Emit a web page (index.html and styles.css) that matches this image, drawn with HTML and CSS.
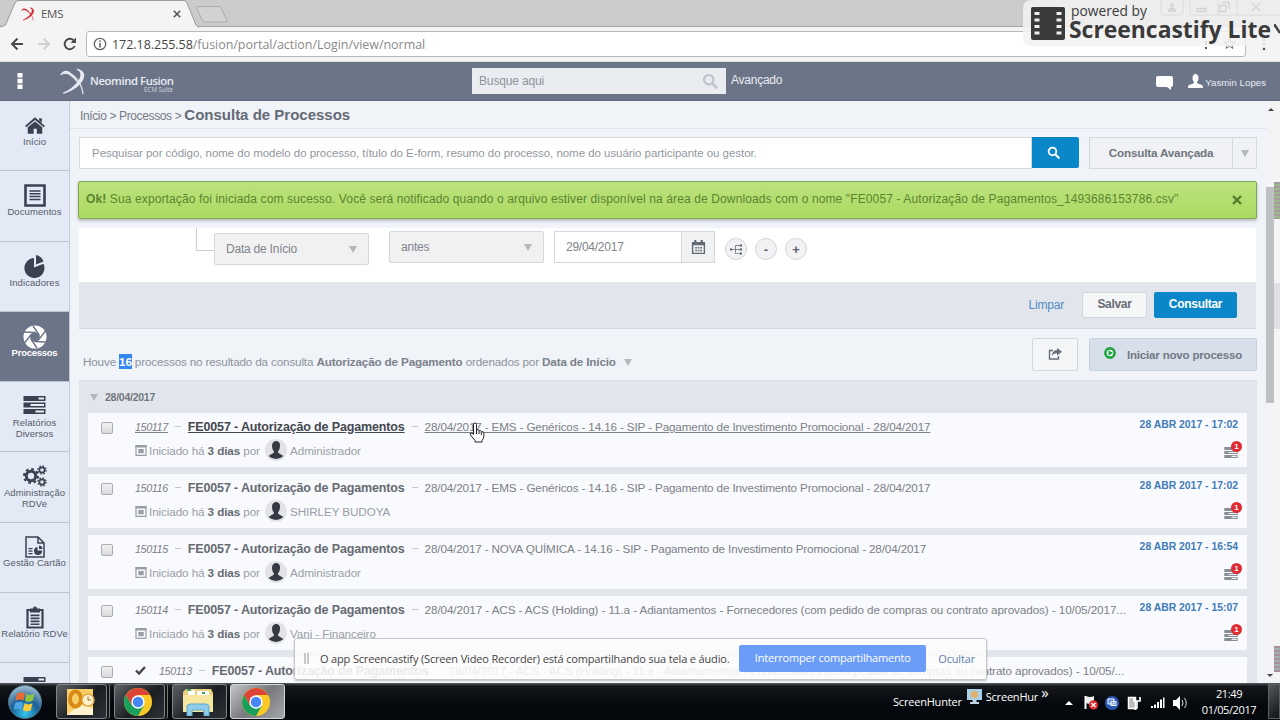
FILE: index.html
```
<!DOCTYPE html>
<html lang="pt-BR">

<head>
   <meta charset="UTF-8" />
   <meta name="viewport" content="width=device-width, initial-scale=1.0" />
   <title>EMS</title>
   <link rel="stylesheet" href="styles.css">
</head>

<body>
   <svg class="sprite" width="0" height="0">
      <symbol id="i-swoosh" viewBox="0 0 28 28">
         <path d="M1 7C6 -2 15 5 21 19C14 8 7 3 1 7Z M18 1C33 3 25 21 3 27C21 17 26 6 18 1Z" />
         <path d="M1 7C9 1 22 10 24.500 27M18 1.500C31 5 23 19 4 26" fill="none" stroke="currentColor" stroke-width="1.300" />
      </symbol>
      <symbol id="i-search" viewBox="0 0 16 16">
         <path d="M11 11L14.5 14.5" stroke="currentColor" stroke-width="2.6" stroke-linecap="round" />
         <circle cx="6.7" cy="6.7" r="4.7" fill="none" stroke="currentColor" stroke-width="2.2" />
      </symbol>
      <symbol id="i-list" viewBox="0 0 22 18">
         <path d="M0 0h22v5H0zM0 6.5h22v5H0zM0 13h22v5H0z" />
         <path d="M15 1.5h5.5v2H15zM7 8h13.5v2H7zM12 14.500h8.500v2H12z" fill="#e8edf8" />
      </symbol>
      <symbol id="i-cal" viewBox="0 0 14 14">
         <path d="M1.500 2.500h11v10h-11z" fill="none" stroke="currentColor" stroke-width="1.300" />
         <path d="M1 2h12v2.800H1zM3 0h2v2H3zM9 0h2v2H9zM4 6.500h1.500v1.500H4zM6.300 6.500h1.500v1.500H6.300zM8.600 6.500h1.500v1.500H8.600zM4 9h1.500v1.500H4zM6.300 9h1.500v1.500H6.300zM8.600 9h1.500v1.500H8.600z" />
      </symbol>
      <symbol id="i-date" viewBox="0 0 12 12">
         <path d="M1 1.500h10v9.800H1z" fill="none" stroke="currentColor" stroke-width="1.200" />
         <path d="M.5 1h11v2.500H.5zM3.300 5h5.400v4.200H3.300z" />
      </symbol>
      <symbol id="i-avatar" viewBox="0 0 22 22">
         <circle cx="11" cy="11" r="11" fill="#e1e3e7" />
         <path d="M7 6.500c0-6 8.500-6 8 0 0 3-1 5-2 6 .2 2 1.500 2 5.500 4.500A11 11 0 0 1 3.500 17C7 14.500 8.800 14.500 9 12.500 7.800 11.500 7 9.500 7 6.500Z" fill="#363944" />
      </symbol>
      <symbol id="i-person" viewBox="0 0 15 14">
         <path d="M4.500 4c0-5.300 6-5.300 6 0 0 2-1 3.500-1.500 4.200.2 1.500 2 1.500 4.500 2.500 1 .4 1.500 1.300 1.500 3.300H0c0-2 .5-2.900 1.500-3.300 2.500-1 4.300-1 4.500-2.500C5.500 7.500 4.500 6 4.500 4Z" />
      </symbol>
      <symbol id="i-chrome" viewBox="0 0 28 28">
         <circle cx="14" cy="14" r="14" fill="#fbc926" />
         <path d="M14 7H26.100A14 14 0 0 0 1.900 7L8 17.500 14 14Z" fill="#dc4437" />
         <path d="M1.900 7A14 14 0 0 0 14 28L20 17.500 14 14 8 17.500Z" fill="#19a05d" />
         <circle cx="14" cy="14" r="6.700" fill="#fff" />
         <circle cx="14" cy="14" r="5.200" fill="#4587f3" />
      </symbol>
   </svg>

   <div class="tabs">
      <svg class="tab-shape" width="240" height="28" viewBox="0 0 240 28">
         <path d="M0 27L5.500 25L15 3Q16 .5 19 .5H183Q186 .5 187 3L196 25L199 27.500" fill="#f4f4f4" stroke="#9b9b9b" />
         <path d="M197 8.500Q196 6.500 198 6.500H218Q220 6.500 221 8.500L227 20Q228 22 226 22H205Q203 22 202 20Z" fill="#d2d2d2" stroke="#aaa" />
      </svg>
      <div class="tab-text">
         <svg class="tab-icon" width="14" height="14"><use href="#i-swoosh" /></svg>
         <span>EMS</span>
         <svg class="tab-close" width="8" height="8" viewBox="0 0 8 8"><path d="M.8 .8L7.200 7.200M7.200 .8L.8 7.200" stroke="#555" stroke-width="1.600" /></svg>
      </div>
   </div>

   <div class="toolbar">
      <svg width="76" height="20" viewBox="0 0 76 20" fill="none" stroke="#4a4a4a" stroke-width="1.900">
         <path d="M13 10H2M7.500 4.500L2 10L7.500 15.500" />
         <path d="M28 10H39M33.500 4.500L39 10L33.500 15.500" stroke="#d0d0d0" />
         <path d="M63.500 6.200A5.200 5.200 0 1 0 64.700 12" />
         <path d="M66 3.500V9H60.500Z" fill="#4a4a4a" stroke="none" />
      </svg>
      <div class="address">
         <svg width="14" height="14" viewBox="0 0 14 14"><circle cx="7" cy="7" r="5.700" fill="none" stroke="#666" stroke-width="1.300" /><path d="M6.200 3.400h1.600v1.500H6.200zM6.200 6h1.600v4.500H6.200z" fill="#666" /></svg>
         <span class="url"><b>172.18.255.58</b>/fusion/portal/action/Login/view/normal</span>
         <svg class="star" width="38" height="16" viewBox="0 0 38 16"><path d="M3 5v4M3 11v2" stroke="#555" stroke-width="2" /><path d="M26.500 2l1.400 3.800 4 .2-3 2.500 1 4-3.400-2.300-3.400 2.300 1-4-3-2.500 4-.2z" fill="#fff" stroke="#777" /></svg>
      </div>
      <svg class="dots" width="4" height="14" viewBox="0 0 4 14" fill="#555"><circle cx="2" cy="3" r="1.300" /><circle cx="2" cy="7.500" r="1.300" /><circle cx="2" cy="12" r="1.300" /></svg>
   </div>

   <div class="watermark">
      <svg class="win-buttons" width="122" height="16" viewBox="0 0 122 16" fill="none" stroke="#dcdcdc">
         <path d="M1 0V12Q1 15 4 15H20Q23 15 23 12V0M30 0V12Q30 15 33 15H122M58 0V15M77 0V15" />
         <path d="M37 8.500h9v3h-9zM62 2.500h7v6M60 5.500h6v6h-6zM92 3l8 8M100 3l-8 8M8.500 11c0-3 7-3 7 0zM10.500 5.500a1.500 1.500 0 0 1 3 0 1.500 1.500 0 0 1-3 0" stroke="#d2d2d2" stroke-width="1.300" />
      </svg>
      <svg width="34" height="33" viewBox="0 0 34 33">
         <path d="M2 0h30q2 0 2 2v29q0 2-2 2H2q-2 0-2-2V2Q0 0 2 0Z" fill="#3a3a3a" />
         <path d="M3.500 5h5v3h-5zM3.500 11.500h5v3h-5zM3.500 18h5v3h-5zM3.500 24.500h5v3h-5zM25.500 5h5v3h-5zM25.500 11.500h5v3h-5zM25.500 18h5v3h-5zM25.500 24.500h5v3h-5z" fill="#eee" />
      </svg>
      <div class="watermark-text">
         <small>powered by</small>
         <strong>Screencastify Lite</strong>
      </div>
      <svg class="watermark-end" width="6" height="12" viewBox="0 0 6 12"><path d="M0 0L6 9" stroke="#444" stroke-width="2.500" /></svg>
   </div>

   <header class="header">
      <svg class="menu" width="6" height="16" viewBox="0 0 6 16" fill="#fff"><path d="M.5 0h5v4.500h-5zM.5 5.700h5v4.500h-5zM.5 11.400h5v4.500h-5z" /></svg>
      <svg class="logo-mark" width="28" height="27"><use href="#i-swoosh" /></svg>
      <div class="logo"><b>Neomind Fusion</b><span>ECM Suite</span></div>
      <div class="quick-search"><span>Busque aqui</span><svg width="16" height="16"><use href="#i-search" /></svg></div>
      <span class="advanced">Avançado</span>
      <svg class="chat" width="17" height="14" viewBox="0 0 17 14" fill="#fff"><path d="M2 0h13q2 0 2 2v7q0 2-2 2v3l-4-3H2q-2 0-2-2V2Q0 0 2 0Z" /></svg>
      <svg class="person" width="15" height="14"><use href="#i-person" /></svg>
      <span class="user">Yasmin Lopes</span>
   </header>

   <div class="app">
      <nav class="sidebar">
         <a class="item">
            <svg width="20" height="17" viewBox="0 0 22 18"><path d="M11 0L22 9.500l-1.300 1.500L11 3 1.300 11 0 9.500zM15.500 1h3v5l-3-2.500zM11 4.500L19 11v7h-6v-5.500H9.500V18H3v-7z" /></svg>
            <span>Início</span>
         </a>
         <a class="item">
            <svg width="22" height="23" viewBox="0 0 22 23"><path d="M1.500 1.500h19v20h-19z" fill="none" stroke="#3c4150" stroke-width="2.600" /><path d="M5.500 7h11M5.500 9.800h11M5.500 12.600h11M5.500 15.400h11" stroke="#3c4150" stroke-width="1.500" /></svg>
            <span>Documentos</span>
         </a>
         <a class="item">
            <svg width="21" height="23" viewBox="0 0 21 23"><path d="M10 3v9.500l9.500-3.700A10 10 0 1 1 10 3Z" /><path d="M12 0a10 10 0 0 1 7.500 6.500L12 9.500Z" /></svg>
            <span>Indicadores</span>
         </a>
         <a class="item active">
            <svg width="24" height="24" viewBox="0 0 24 24"><circle cx="12" cy="12" r="11.500" /><path d="M12 7.500L16 9.700V14.300L12 16.500L8 14.300V9.700ZM16 9.700L10 1M16 14.300L22.500 6M12 16.500L23 17M8 14.300L14 23M8 9.700L1.500 18M12 7.500L1 7" fill="#6c7587" stroke="#6c7587" stroke-width="1.400" /></svg>
            <span>Processos</span>
         </a>
         <a class="item">
            <svg width="23" height="18"><use href="#i-list" /></svg>
            <span>Relatórios<br>Diversos</span>
         </a>
         <a class="item">
            <svg width="24" height="22" viewBox="0 0 24 22" fill="none" stroke="#3c4150"><circle cx="8" cy="11" r="4.700" stroke-width="3" /><circle cx="8" cy="11" r="7" stroke-width="2" stroke-dasharray="2.750" /><circle cx="19" cy="5" r="2.600" stroke-width="1.600" /><circle cx="19" cy="5" r="4" stroke-width="1.400" stroke-dasharray="1.570" /><circle cx="19" cy="17" r="2.600" stroke-width="1.600" /><circle cx="19" cy="17" r="4" stroke-width="1.400" stroke-dasharray="1.570" /></svg>
            <span>Administração<br>RDVe</span>
         </a>
         <a class="item">
            <svg width="20" height="22" viewBox="0 0 20 22"><path d="M1 1h12l6 6v14H1zM13 1v6h6" fill="none" stroke="#3c4150" stroke-width="1.500" /><path d="M3.500 12h4v1.300h-4zM3.500 14.500h4v1.300h-4zM3.500 17h4v1.300h-4zM12.500 11v3.500H17a4 4 0 1 1-4.500-3.500zM14 9.500a4 4 0 0 1 3.500 3.500H14z" /></svg>
            <span>Gestão Cartão</span>
         </a>
         <a class="item">
            <svg width="18" height="23" viewBox="0 0 18 23"><path d="M1.500 4h15v17.500h-15z" fill="none" stroke="#3c4150" stroke-width="2.200" /><path d="M4 2.500h3a2 2 0 0 1 4 0h3V6.500H4zM4.500 8.500h9v1.700h-9zM4.500 11.500h9v1.700h-9zM4.500 14.500h9v1.700h-9zM4.500 17.500h9v1.500h-9z" /></svg>
            <span>Relatório RDVe</span>
         </a>
         <a class="item">
            <svg width="23" height="18"><use href="#i-list" /></svg>
         </a>
      </nav>

      <main class="content">
         <div class="breadcrumb">Início &gt; Processos &gt; <b>Consulta de Processos</b></div>

         <div class="search-row">
            <div class="search-input">Pesquisar por código, nome do modelo do processo, título do E-form, resumo do processo, nome do usuário participante ou gestor.</div>
            <div class="search-btn"><svg width="13" height="13"><use href="#i-search" /></svg></div>
            <div class="adv-btn"><b>Consulta Avançada</b><i><em class="caret"></em></i></div>
         </div>

         <div class="alert">
            <span><b>Ok!</b> Sua exportação foi iniciada com sucesso. Você será notificado quando o arquivo estiver disponível na área de Downloads com o nome "FE0057 - Autorização de Pagamentos_1493686153786.csv"</span>
            <svg width="10" height="10" viewBox="0 0 10 10"><path d="M1 1L9 9M9 1L1 9" stroke="#527c2c" stroke-width="2.400" /></svg>
         </div>

         <div class="filter">
            <div class="branch"></div>
            <div class="select first">Data de Início<em class="caret"></em></div>
            <div class="select">antes<em class="caret"></em></div>
            <div class="date"><span>29/04/2017</span><i><svg width="15" height="15"><use href="#i-cal" /></svg></i></div>
            <div class="round"><svg width="12" height="11" viewBox="0 0 12 11" fill="none" stroke="#59616e"><path d="M0 5.500h5M9 1.500H5.500v8H9M5.500 5.500H9" stroke-dasharray="1.500 .6" /><path d="M0 5.500h2M9.500 1.500h2.500M9.500 5.500h2.500M9.500 9.500h2.500" stroke-width="1.800" /></svg></div>
            <div class="round">-</div>
            <div class="round">+</div>
         </div>
         <div class="filter-actions">
            <a>Limpar</a>
            <div class="btn">Salvar</div>
            <div class="btn primary">Consultar</div>
         </div>

         <div class="summary">
            <p>Houve <mark>16</mark> processos no resultado da consulta <b>Autorização de Pagamento</b> ordenados por <b>Data de Início</b><em class="caret"></em></p>
            <div class="share"><svg width="14" height="12" viewBox="0 0 14 12"><path d="M5 2.500H1.500v8.500h9V8" fill="none" stroke="#666d78" stroke-width="1.400" /><path d="M9 0l5 3.800-5 3.700V5.200C6 5.200 5 6.200 4 8c0-4 2-5.800 5-5.800z" fill="#666d78" /></svg></div>
            <div class="new-process"><svg width="12" height="12" viewBox="0 0 12 12"><circle cx="6" cy="6" r="4.600" fill="#fff" stroke="#1ca53c" stroke-width="2.600" /><path d="M4.500 3.300L9 6l-4.500 2.700z" fill="#1ca53c" /></svg>Iniciar novo processo</div>
         </div>

         <section class="list">
            <div class="group"><em class="caret"></em>28/04/2017</div>

            <article class="card hover">
               <div class="box"></div>
               <div class="info">
                  <div class="line"><i class="code">150117</i><s></s><b>FE0057 - Autorização de Pagamentos</b><s></s><span class="desc">28/04/2017 - EMS - Genéricos - 14.16 - SIP - Pagamento de Investimento Promocional - 28/04/2017</span></div>
                  <div class="meta"><svg width="12" height="12"><use href="#i-date" /></svg>Iniciado há <b>3 dias</b> por <svg class="avatar" width="22" height="22"><use href="#i-avatar" /></svg>Administrador</div>
               </div>
               <div class="side"><time>28 ABR 2017 - 17:02</time><div class="tasks"><svg width="14" height="11"><use href="#i-list" /></svg><span>1</span></div></div>
            </article>

            <article class="card">
               <div class="box"></div>
               <div class="info">
                  <div class="line"><i class="code">150116</i><s></s><b>FE0057 - Autorização de Pagamentos</b><s></s><span class="desc">28/04/2017 - EMS - Genéricos - 14.16 - SIP - Pagamento de Investimento Promocional - 28/04/2017</span></div>
                  <div class="meta"><svg width="12" height="12"><use href="#i-date" /></svg>Iniciado há <b>3 dias</b> por <svg class="avatar" width="22" height="22"><use href="#i-avatar" /></svg>SHIRLEY BUDOYA</div>
               </div>
               <div class="side"><time>28 ABR 2017 - 17:02</time><div class="tasks"><svg width="14" height="11"><use href="#i-list" /></svg><span>1</span></div></div>
            </article>

            <article class="card">
               <div class="box"></div>
               <div class="info">
                  <div class="line"><i class="code">150115</i><s></s><b>FE0057 - Autorização de Pagamentos</b><s></s><span class="desc">28/04/2017 - NOVA QUÍMICA - 14.16 - SIP - Pagamento de Investimento Promocional - 28/04/2017</span></div>
                  <div class="meta"><svg width="12" height="12"><use href="#i-date" /></svg>Iniciado há <b>3 dias</b> por <svg class="avatar" width="22" height="22"><use href="#i-avatar" /></svg>Administrador</div>
               </div>
               <div class="side"><time>28 ABR 2017 - 16:54</time><div class="tasks"><svg width="14" height="11"><use href="#i-list" /></svg><span>1</span></div></div>
            </article>

            <article class="card">
               <div class="box"></div>
               <div class="info">
                  <div class="line"><i class="code">150114</i><s></s><b>FE0057 - Autorização de Pagamentos</b><s></s><span class="desc long">28/04/2017 - ACS - ACS (Holding) - 11.a - Adiantamentos - Fornecedores (com pedido de compras ou contrato aprovados) - 10/05/2017...</span></div>
                  <div class="meta"><svg width="12" height="12"><use href="#i-date" /></svg>Iniciado há <b>3 dias</b> por <svg class="avatar" width="22" height="22"><use href="#i-avatar" /></svg>Vani - Financeiro</div>
               </div>
               <div class="side"><time>28 ABR 2017 - 15:07</time><div class="tasks"><svg width="14" height="11"><use href="#i-list" /></svg><span>1</span></div></div>
            </article>

            <article class="card">
               <div class="box"></div>
               <div class="info">
                  <div class="line"><svg class="check" width="11" height="9" viewBox="0 0 11 9"><path d="M1 4.500L4 7.500L10 1" fill="none" stroke="#444" stroke-width="2.400" /></svg><i class="code">150113</i><s></s><b>FE0057 - Autorização de Pagamentos</b><s></s><span class="desc long">28/04/2017 - ACS - ACS (Holding) - 11.a - Adiantamentos - Fornecedores (com pedido de compras ou contrato aprovados) - 10/05/...</span></div>
               </div>
            </article>
         </section>
      </main>

      <div class="scrollbar"><i class="up"></i><i class="thumb"></i><i class="down"></i></div>
      <div class="edge"><i class="edge-alert"></i><i class="edge-panel"></i><i class="edge-bottom"></i></div>
   </div>

   <div class="share-bar">
      <i class="grip"></i>
      <span class="share-text">O app Screencastify (Screen Video Recorder) está compartilhando sua tela e áudio.</span>
      <span class="stop">Interromper compartilhamento</span>
      <a>Ocultar</a>
   </div>

   <svg class="cursor" width="16" height="21" viewBox="0 0 16 21"><path d="M4.500 12V2.500Q4.500 1 6 1T7.500 2.500V8Q9.500 7 10 8.700Q12 8 12.300 9.700Q14.800 9 14.800 11.500V14.500Q14.500 17 13 18.500V20H6V18.500L1.500 13Q.5 11.500 2 11Q3 10.800 4.500 12.500Z" fill="#fff" stroke="#222" /><path d="M7.500 8v4M10 9v3M12.300 10v3" stroke="#222" /></svg>

   <footer class="taskbar">
      <svg class="start" width="36" height="34" viewBox="0 0 36 34">
         <defs><radialGradient id="orb" cx=".5" cy=".85" r=".85"><stop offset="0" stop-color="#35c5ee" /><stop offset=".5" stop-color="#1a5f95" /><stop offset="1" stop-color="#a9c4d5" /></radialGradient></defs>
         <circle cx="18" cy="17" r="16.500" fill="url(#orb)" stroke="#4f7189" />
         <path d="M10 9q4-2.500 8-.5l-1.500 7q-4-2-8 .3z" fill="#ea6a32" />
         <path d="M19.500 9q4 2 8-.2l-1.700 7q-4 2.200-8 0z" fill="#8fc640" />
         <path d="M8 18q4-2.300 8-.3l-1.600 7q-4-2-7.900.3z" fill="#4ba5e4" />
         <path d="M17.500 18.300q4 2.200 8 0l-1.700 7q-4 2.200-8 0z" fill="#fbcb3c" />
      </svg>
      <div class="task stacked">
         <svg width="30" height="28" viewBox="0 0 30 28"><path d="M2 1h26v26H2z" fill="#f6cf66" /><path d="M4 25l11-8 13 3v7H2z" fill="#fff4d0" /><ellipse cx="10.500" cy="11" rx="5.500" ry="7.500" fill="none" stroke="#d98a16" stroke-width="4" /><circle cx="23" cy="12" r="6" fill="#fff3cf" stroke="#e3a944" stroke-width="1.500" /><path d="M23 8.500V12h3" fill="none" stroke="#a06d1c" /></svg>
      </div>
      <div class="task stacked second"><svg width="28" height="28"><use href="#i-chrome" /></svg></div>
      <div class="task third">
         <svg width="32" height="28" viewBox="0 0 32 28"><path d="M1 4l3-3h25l2 4v19H1z" fill="#e9d27b" /><path d="M6 2h7v5H6zM15 3h12v5H15z" fill="#fff" /><path d="M5 1h4v2H5zM20 4h3v2h-3z" fill="#41a25a" /><path d="M1 7h30v17H1z" fill="#f5e6a0" /><path d="M5 28V19q0-3 3-3h16q3 0 3 3v9h-5v-6H10v6z" fill="#8fcdea" stroke="#5ba9d0" /></svg>
      </div>
      <div class="task current"><svg width="28" height="28"><use href="#i-chrome" /></svg></div>

      <span class="hunter">ScreenHunter</span>
      <svg class="monitor" width="15" height="15" viewBox="0 0 15 15"><path d="M0 0h15v11H0z" fill="#a9d0ea" /><circle cx="7.500" cy="5.500" r="3.800" fill="#e0b270" /><path d="M5.500 11h4v2h2.500v2H3v-2h2.500z" fill="#bcd2e0" /></svg>
      <span class="hur">ScreenHur</span>
      <span class="more">»</span>
      <svg class="tray" width="125" height="18" viewBox="0 0 125 18">
         <path d="M0 12L4 8L8 12Z" fill="#fff" />
         <path d="M20.500 3V16" stroke="#fff" stroke-width="2" /><path d="M21 3q4 2 8 0v7q-4 2-8 0z" fill="#eee" /><circle cx="28.500" cy="12" r="4.700" fill="#d92c2c" /><path d="M26.500 10l4 4M30.500 10l-4 4" stroke="#fff" stroke-width="1.300" />
         <circle cx="47" cy="10" r="7" fill="#2a59b5" /><path d="M43 6h6v5h-6zM46 8.500h5v4h-5z" fill="#5483dd" stroke="#fff" />
         <path d="M63.500 4.500h7v11h-7z" fill="#bbb" stroke="#fff" stroke-width="1.500" /><path d="M69 4v4h6V4M72 8v6q0 2-3 2" stroke="#fff" stroke-width="1.700" fill="none" />
         <path d="M86 13h2v2h-2zM89 11.500h2V15h-2zM92 9h2v6h-2zM95 6.500h2V15h-2zM98 4.500h1.500V15H98z" fill="#fff" />
         <path d="M108 7h3l4-4v14l-4-4h-3z" fill="#fff" /><path d="M117 7q2 3 0 6M119.500 5q3.500 5 0 10" fill="none" stroke="#ddd" />
      </svg>
      <div class="clock">21:49<br>01/05/2017</div>
      <div class="show-desktop"></div>
   </footer>
</body>

</html>
```

FILE: styles.css
```
*,
*::before,
*::after {
   margin: 0;
   padding: 0;
   box-sizing: border-box;
}

body {
   position: relative;
   width: 1280px;
   height: 720px;
   overflow: hidden;
   display: flex;
   flex-direction: column;
   font-family: "Liberation Sans", Arial, sans-serif;
   font-size: 12px;
   color: #7e848d;
   background: #f0f3f8;
}

svg {
   display: block;
   flex: none;
}

svg:not([fill]) {
   fill: currentColor;
}

i,
em,
s {
   font-style: normal;
   text-decoration: none;
}

.sprite {
   position: absolute;
}

.caret {
   display: inline-block;
   border: 4px solid transparent;
   border-top: 7px solid #b4b7bb;
   border-bottom: 0;
}

/* browser chrome */
.tabs {
   position: relative;
   flex: none;
   height: 27px;
   background: #cbcbcb;
   border-bottom: 1px solid #a5a5a5;
}

.tab-shape {
   position: absolute;
   top: 0;
   left: 0;
}

.tab-text {
   position: relative;
   display: flex;
   align-items: center;
   height: 27px;
   padding-left: 21px;
   font: 11.5px "Open Sans", sans-serif;
   letter-spacing: -0.3px;
   color: #555;
}

.tab-icon {
   margin-right: 6px;
   color: #d52b33;
}

.tab-close {
   margin-left: 110px;
}

.toolbar {
   flex: none;
   display: flex;
   align-items: center;
   height: 35px;
   padding: 0 14px 0 10px;
   background: #f4f4f4;
   border-bottom: 1px solid #dedede;
}

.address {
   display: flex;
   align-items: center;
   flex: 1;
   height: 26px;
   padding: 0 4px 0 6px;
   background: #fff;
   border: 1px solid #b9b9b9;
   border-radius: 3px;
   margin-right: 16px;
}

.url {
   flex: 1;
   margin-left: 5px;
   font: 12.5px "Open Sans", sans-serif;
   letter-spacing: -0.04px;
   color: #8a8a8a;
}

.url b {
   font-weight: 400;
   color: #444;
}

.watermark {
   position: absolute;
   top: 0;
   left: 1023px;
   width: 257px;
   height: 46px;
   padding: 7px 0 0 8px;
   display: flex;
   gap: 5px;
   background: rgba(242, 242, 242, 0.86);
   border-radius: 8px 0 0 8px;
   overflow: hidden;
   font-family: "Open Sans", sans-serif;
   color: #3a3a3a;
}

.win-buttons {
   position: absolute;
   top: 0;
   left: 137px;
}

.watermark-end {
   position: absolute;
   top: 24px;
   right: 0;
}

.watermark-text {
   position: relative;
   margin: -6px 0 0 -1px;
   white-space: nowrap;
}

.watermark-text small {
   display: block;
   padding-left: 2px;
   font-size: 13.8px;
   line-height: 19px;
}

.watermark-text strong {
   display: block;
   font-size: 22.9px;
   line-height: 19px;
}

/* application header */
.header {
   flex: none;
   display: flex;
   align-items: center;
   height: 39px;
   padding-left: 17px;
   background: #6c7587;
   border-bottom: 1px solid #5d667a;
   color: #e7ebf3;
}

.logo-mark {
   margin: 0 3px 0 36px;
}

.logo {
   width: 83px;
   padding-top: 5px;
   font-family: "Open Sans", sans-serif;
}

.logo b {
   display: block;
   font-size: 11.3px;
   font-weight: 600;
   line-height: 12px;
   letter-spacing: -0.4px;
   white-space: nowrap;
}

.logo span {
   display: block;
   font-size: 6.2px;
   line-height: 6px;
   text-align: right;
   opacity: 0.8;
}

.quick-search {
   display: flex;
   align-items: center;
   justify-content: space-between;
   width: 254px;
   height: 26px;
   margin-left: 299px;
   padding: 0 8px 0 7px;
   background: #e9ecf0;
   letter-spacing: -0.15px;
   color: #8d949e;
}

.quick-search svg {
   color: #bfc4cb;
}

.advanced {
   margin: -3px 0 0 5px;
   letter-spacing: -0.25px;
}

.chat {
   margin: 3px 15px 0 auto;
}

.person {
   color: #fff;
   margin-right: 2px;
}

.user {
   margin-right: 14px;
   padding-top: 2px;
   font-size: 9.7px;
}

/* body */
.app {
   flex: 1;
   min-height: 0;
   display: grid;
   grid-template-columns: 70px 1196px 8px 6px;
   overflow: hidden;
}

.sidebar {
   height: 582px;
   overflow: hidden;
   background: #e3e9f5;
   border-right: 1px solid #c3c9d6;
   color: #3c4150;
}

.item {
   display: flex;
   flex-direction: column;
   align-items: center;
   height: 70.3px;
   padding-top: 13px;
   border-bottom: 1px solid #bcc3d2;
   font-size: 9.5px;
   line-height: 11px;
   letter-spacing: 0.08px;
   text-align: center;
   white-space: nowrap;
   color: #565c69;
}

.item span {
   margin-top: -1px;
}

.item svg {
   color: #3c4150;
}

.item:first-child {
   padding-top: 16px;
}

.item:first-child svg {
   margin-bottom: 3px;
}

.item:nth-child(5) svg {
   margin: 1px 0 4px;
}

.item:nth-child(6) svg {
   margin-bottom: 1px;
}

.item:nth-child(9) svg {
   margin-top: 1px;
}

.item.active {
   background: #6c7587;
   color: #fff;
   font-weight: 700;
   letter-spacing: -0.25px;
}

.item.active svg {
   margin-bottom: -1px;
   color: #fff;
}

.content {
   position: relative;
   height: 582px;
   overflow: hidden;
   background: #f0f3f8;
}

.breadcrumb {
   height: 28px;
   padding-left: 10px;
   border-bottom: 1px solid #dfe3ec;
   line-height: 27px;
   letter-spacing: -0.37px;
   color: #747a84;
}

.breadcrumb b {
   font-size: 15px;
   letter-spacing: 0;
   color: #646a75;
}

.search-row {
   display: flex;
   margin: 8px 9px 0;
   height: 32px;
}

.search-input {
   width: 953px;
   padding-left: 12px;
   border: 1px solid #d4d8df;
   background: #fff;
   line-height: 30px;
   font-size: 11.5px;
   letter-spacing: -0.04px;
   color: #92979f;
   white-space: nowrap;
}

.search-btn {
   display: flex;
   align-items: center;
   justify-content: center;
   width: 47px;
   height: 31px;
   padding-right: 4px;
   background: #0a87c9;
   border-radius: 0 2px 2px 0;
   color: #fff;
}

.adv-btn {
   display: flex;
   width: 168px;
   margin-left: 10px;
   border: 1px solid #d4d8df;
   background: #f1f2f5;
   line-height: 30px;
   color: #70767f;
}

.adv-btn b {
   flex: 1;
   font-size: 11.7px;
   letter-spacing: -0.18px;
   text-align: center;
}

.adv-btn i {
   display: flex;
   align-items: center;
   justify-content: center;
   width: 24px;
   border-left: 1px solid #d4d8df;
}

.alert {
   display: flex;
   align-items: center;
   justify-content: space-between;
   width: 1179px;
   height: 38px;
   margin: 12px 0 9px 8px;
   padding: 0 14px 0 7px;
   border: 1px solid #7fa652;
   border-radius: 2px;
   background: linear-gradient(#bce27d, #acda62);
   box-shadow: 0 2px 3px rgba(80, 90, 100, 0.35);
   letter-spacing: 0.12px;
   color: #5b8430;
   white-space: nowrap;
}

.alert span {
   margin-top: -3px;
}

.filter {
   display: flex;
   height: 54px;
   margin: 0 10px 0 9px;
   padding-left: 117px;
   background: #fff;
}

.branch {
   width: 18px;
   height: 23px;
   border: solid #cbcdd2;
   border-width: 0 0 1px 1px;
}

.select {
   display: flex;
   align-items: center;
   justify-content: space-between;
   width: 155px;
   height: 32px;
   margin: 3px 10px 0 0;
   padding: 0 11px;
   border: 1px solid #d6d8db;
   border-radius: 2px;
   background: #f1f1f2;
   letter-spacing: -0.22px;
}

.select.first {
   margin: 5px 20px 0 0;
}

.date {
   display: flex;
   width: 161px;
   height: 32px;
   margin: 3px 10px 0 0;
   border: 1px solid #d6d8db;
   line-height: 30px;
   letter-spacing: -0.25px;
}

.date span {
   flex: 1;
   padding-left: 11px;
}

.date i {
   display: flex;
   align-items: center;
   justify-content: center;
   width: 33px;
   border-left: 1px solid #d6d8db;
   background: #f0f1f3;
   color: #626975;
}

.round {
   display: flex;
   align-items: center;
   justify-content: center;
   width: 22px;
   height: 22px;
   margin: 10px 8px 0 0;
   border: 1px solid #d3d5d9;
   border-radius: 50%;
   background: #f2f2f4;
   font-size: 13px;
   font-weight: 700;
   color: #59616e;
}

.filter-actions {
   display: flex;
   align-items: center;
   justify-content: flex-end;
   height: 47px;
   margin: 0 10px 0 9px;
   padding-right: 19px;
   background: #e2e6ec;
   border-bottom: 1px solid #d4d9e1;
}

.filter-actions a {
   margin-right: 18px;
   letter-spacing: -0.2px;
   color: #4f8bc5;
}

.btn {
   width: 65px;
   height: 26px;
   margin-right: 7px;
   border: 1px solid #d2d5da;
   border-radius: 2px;
   background: #f5f6f8;
   line-height: 23px;
   font-weight: 700;
   letter-spacing: -0.3px;
   text-align: center;
   color: #666b73;
}

.btn.primary {
   width: 83px;
   margin-right: 0;
   background: #0a87c9;
   border-color: #0a87c9;
   color: #fff;
}

.summary {
   display: flex;
   height: 51px;
   padding: 9px 9px 0 13px;
}

.summary p {
   flex: 1;
   padding-top: 17px;
   font-size: 11.7px;
   letter-spacing: -0.16px;
   color: #8d939d;
}

.summary p b {
   color: #7c828c;
}

.summary mark {
   padding: 1px 0;
   background: #3288f0;
   color: #fff;
   font-weight: 700;
}

.summary .caret {
   margin-left: 8px;
}

.share {
   display: flex;
   align-items: center;
   justify-content: center;
   width: 46px;
   height: 33px;
   padding-bottom: 2px;
   border: 1px solid #d2d6dd;
   border-radius: 2px;
   background: #f4f5f7;
}

.new-process {
   display: flex;
   align-items: center;
   width: 168px;
   height: 33px;
   margin-left: 11px;
   padding-left: 14px;
   border: 1px solid #c9d1de;
   border-radius: 2px;
   background: #d7dfea;
   font-size: 11.5px;
   font-weight: 700;
   letter-spacing: -0.18px;
   color: #727983;
}

.new-process svg {
   margin: -3px 11px 0 0;
}

.list {
   height: 310px;
   margin: 0 9px;
   padding: 0 10px 0 9px;
   background: #e2e6ec;
   border-top: 1px solid #dadfe7;
}

.group {
   display: flex;
   align-items: center;
   height: 32px;
   padding-left: 2px;
   font-size: 10.5px;
   font-weight: 700;
   letter-spacing: -0.25px;
   color: #71767e;
}

.group .caret {
   margin-right: 7px;
}

.card {
   display: flex;
   height: 54px;
   margin-bottom: 7px;
   padding: 0 9px 0 13px;
   background: #f9fafd;
}

.box {
   flex: none;
   width: 12px;
   height: 12px;
   margin-top: 9px;
   border: 1px solid #a9acb1;
   border-radius: 2px;
   background: linear-gradient(#f1f1f1, #d9dadc);
}

.info {
   flex: 1;
   min-width: 0;
   padding: 6px 0 0 22px;
   white-space: nowrap;
}

.line {
   display: flex;
   align-items: center;
   height: 15px;
   color: #7c8087;
}

.line b {
   font-size: 12.5px;
   letter-spacing: -0.15px;
   color: #666a72;
}

.line s {
   flex: none;
   width: 6px;
   height: 1px;
   margin: 0 7px;
   background: #c3c6cb;
}

.code {
   font-size: 10.8px;
   letter-spacing: -0.4px;
   font-style: italic;
}

.desc {
   font-size: 11.7px;
   letter-spacing: -0.144px;
}

.desc.long {
   letter-spacing: -0.09px;
}

.check {
   margin-right: 13px;
}

.hover .code,
.hover .line b,
.hover .desc {
   text-decoration: underline;
   text-underline-offset: 1px;
}

.hover .line b {
   color: #444850;
}

.meta {
   display: flex;
   align-items: center;
   height: 22px;
   margin-top: 5px;
   font-size: 11.7px;
   letter-spacing: -0.1px;
   color: #9a9ea6;
   white-space: pre;
}

.meta b {
   color: #666a72;
}

.meta svg {
   margin-right: 2px;
}

.meta .avatar {
   margin: 0 3px 0 2px;
}

.side {
   flex: none;
   width: 100px;
   padding-top: 5px;
}

.side time {
   display: block;
   font-size: 10.4px;
   font-weight: 700;
   line-height: 14px;
   text-align: right;
   white-space: nowrap;
   color: #3f7cb8;
}

.tasks {
   position: relative;
   width: 14px;
   margin: 15px 0 0 86px;
   color: #8a8d93;
}

.tasks span {
   position: absolute;
   top: -6px;
   left: 7px;
   width: 11px;
   height: 11px;
   border-radius: 50%;
   background: #e02a31;
   font-size: 8px;
   font-weight: 700;
   line-height: 11px;
   text-align: center;
   color: #fff;
}

.scrollbar {
   display: flex;
   flex-direction: column;
   height: 582px;
   background: #f3f3f5;
}

.scrollbar i {
   align-self: center;
}

.up,
.down {
   border: 3px solid transparent;
}

.scrollbar .up {
   align-self: flex-end;
   margin-top: 7px;
   border-bottom-color: #444;
   border-top: 0;
}

.scrollbar .thumb {
   width: 8px;
   height: 216px;
   margin-top: 76px;
   background: #bfc0c2;
}

.down {
   margin: auto 0 6px;
   border-top-color: #444;
   border-bottom: 0;
}

.edge {
   display: flex;
   flex-direction: column;
   height: 582px;
   background: #f4f4f4;
}

.edge-alert {
   height: 37px;
   margin-top: 81px;
   background: repeating-linear-gradient(#a49aa2 0 2px, #9fb58a 2px 4px);
}

.edge-panel {
   height: 46px;
   margin-top: 64px;
   background: #dfe1e4;
}

.edge-bottom {
   height: 26px;
   margin-top: auto;
   margin-bottom: 11px;
   background: repeating-linear-gradient(#a98f98 0 2px, #9fb0b5 2px 4px);
}

/* screen sharing notice */
.share-bar {
   position: absolute;
   top: 638px;
   left: 294px;
   display: flex;
   align-items: center;
   width: 693px;
   height: 42px;
   padding: 0 11px 2px 9px;
   background: rgba(252, 252, 252, 0.88);
   border: 1px solid #c5c6c9;
   border-radius: 3px;
   box-shadow: 0 1px 2px rgba(0, 0, 0, 0.25);
   font: 11px "Open Sans", sans-serif;
   letter-spacing: -0.16px;
   color: #444;
   white-space: nowrap;
}

.grip {
   width: 5px;
   height: 11px;
   margin-right: 11px;
   border: solid #c7c7c7;
   border-width: 0 2px;
}

.stop {
   width: 187px;
   height: 27px;
   margin-left: auto;
   border-radius: 2px;
   background: #6a9cf8;
   line-height: 26px;
   letter-spacing: -0.2px;
   text-align: center;
   color: #fff;
}

.share-bar a {
   margin-left: 12px;
   color: #5c80b0;
}

.cursor {
   position: absolute;
   top: 422px;
   left: 469px;
}

/* taskbar */
.taskbar {
   flex: none;
   display: flex;
   align-items: center;
   height: 37px;
   padding-left: 7px;
   background: linear-gradient(#5b6066, #14181d 3px, #04070b 60%, #05080c);
   font: 11px "Open Sans", sans-serif;
   letter-spacing: -0.2px;
   color: #fff;
}

.start {
   margin-right: 13px;
}

.task {
   display: flex;
   align-items: center;
   justify-content: center;
   width: 51px;
   height: 35px;
   border: 1px solid #80858a;
   border-radius: 3px;
   background: linear-gradient(135deg, #5c6064, #1b1f23 55%, #2d3135);
}

.task svg {
   margin-right: 4px;
}

.stacked {
   box-shadow: 2px 0 0 #111, 3px 0 0 #777;
}

.second {
   margin-left: 7px;
}

.third {
   width: 55px;
   margin-left: 7px;
}

.current {
   width: 55px;
   margin-left: 3px;
   border-color: #d5d6d8;
   background: linear-gradient(135deg, #c4c5c7, #77797c 50%, #a5a6a8);
}

.hunter {
   margin-left: 608px;
}

.monitor {
   margin: -11px 4px 0 5px;
}

.hur {
   margin-top: -10px;
}

.more {
   margin: -20px 0 0 3px;
   font-size: 15px;
}

.tray {
   margin-left: auto;
}

.clock {
   width: 56px;
   margin: 0 11px 0 11px;
   line-height: 16px;
   letter-spacing: -0.4px;
   text-align: center;
}

.show-desktop {
   width: 12px;
   height: 35px;
   border: 1px solid #5b5f64;
   background: linear-gradient(135deg, #55595e, #0e1115);
}
```
